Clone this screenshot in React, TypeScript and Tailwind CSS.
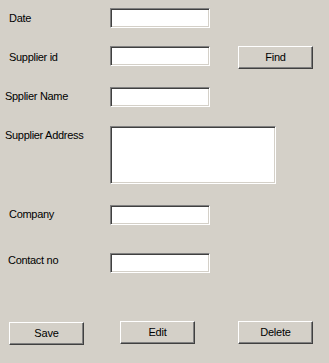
import React from "react";

const font = { fontFamily: '"Liberation Sans", Arial, sans-serif' };

function TextBox({ className = "" }: { className?: string }) {
  return (
    <input
      type="text"
      className={`block bg-white border border-t-[#808080] border-l-[#808080] border-b-white border-r-white shadow-[inset_1px_1px_0_#404040,inset_-1px_-1px_0_#d4d0c8] outline-none ${className}`}
    />
  );
}

function Button({ label, className = "" }: { label: string; className?: string }) {
  return (
    <button
      className={`w-[75px] h-[23px] bg-[#d4d0c8] border border-t-white border-l-white border-b-[#404040] border-r-[#404040] shadow-[inset_-1px_-1px_0_#808080] text-[11px] text-black leading-none tracking-[-0.2px] ${className}`}
    >
      {label}
    </button>
  );
}

export default function App() {
  return (
    <div
      className="w-[329px] h-[363px] bg-[#d4d0c8] text-[11px] tracking-[-0.3px] text-black relative overflow-hidden"
      style={font}
    >
      <div className="flex flex-col pt-2">
        <div className="flex items-center h-5">
          <span className="w-[110px] pl-[9px]">Date</span>
          <TextBox className="w-[100px] h-5" />
        </div>

        <div className="flex items-start h-[23px] mt-[18px]">
          <span className="w-[110px] pl-[9px] leading-5 mt-[1px]">Supplier id</span>
          <TextBox className="w-[100px] h-5" />
          <Button label="Find" className="ml-[28px]" />
        </div>

        <div className="flex items-center h-5 mt-[18px]">
          <span className="w-[110px] pl-[5px] -mt-[2px]">Spplier Name</span>
          <TextBox className="w-[100px] h-5" />
        </div>

        <div className="flex items-start mt-[19px]">
          <span className="w-[110px] pl-[5px] mt-[1px]">Supplier Address</span>
          <textarea className="block w-[166px] h-[58px] resize-none bg-white border border-t-[#808080] border-l-[#808080] border-b-white border-r-white shadow-[inset_1px_1px_0_#404040,inset_-1px_-1px_0_#d4d0c8] outline-none" />
        </div>

        <div className="flex items-center h-5 mt-[21px]">
          <span className="w-[110px] pl-[9px] -mt-[1px]">Company</span>
          <TextBox className="w-[100px] h-5" />
        </div>

        <div className="flex items-center h-5 mt-[28px]">
          <span className="w-[110px] pl-[8px] -mt-[6px]">Contact no</span>
          <TextBox className="w-[100px] h-5" />
        </div>

        <div className="flex items-start mt-[48px]">
          <Button label="Save" className="ml-[9px] mt-[1px]" />
          <Button label="Edit" className="ml-[36px]" />
          <Button label="Delete" className="ml-[43px]" />
        </div>
      </div>
    </div>
  );
}
